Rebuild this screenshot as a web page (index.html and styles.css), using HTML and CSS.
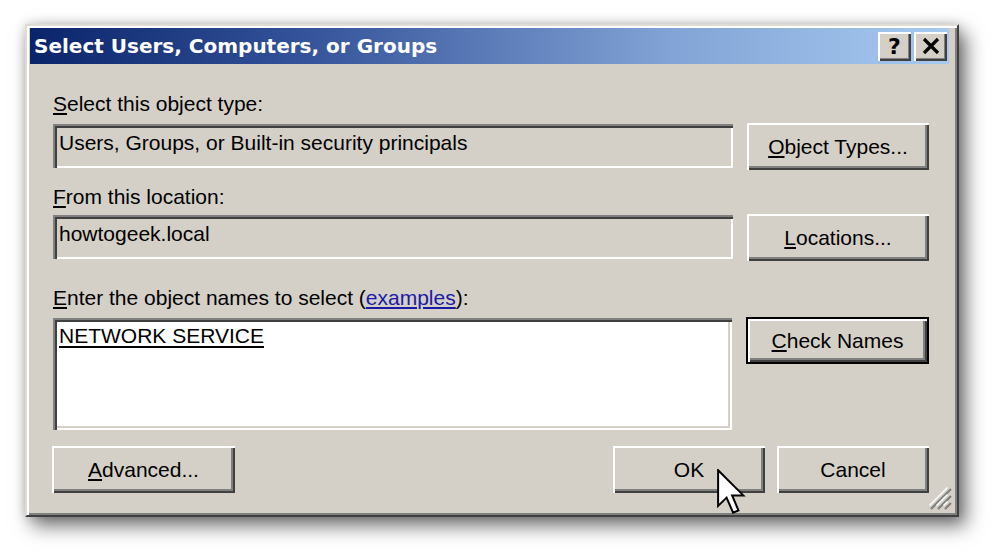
FILE: index.html
```html
<!DOCTYPE html>
<html>
<head>
<meta charset="utf-8">
<link rel="stylesheet" href="styles.css">
</head>
<body>
<div class="stage">
  <div class="window">
    <div class="titlebar">
      <span class="title">Select Users, Computers, or Groups</span>
      <div class="caption-btns">
        <span class="cap cap-help">?</span>
        <span class="cap cap-close">
          <svg width="20" height="18" viewBox="0 0 20 18"><path d="M3 2 L17 16 M17 2 L3 16" stroke="#000" stroke-width="3.2" fill="none"/></svg>
        </span>
      </div>
    </div>
    <div class="body">
      <div class="lbl lbl-first"><u>S</u>elect this object type:</div>
      <div class="row">
        <div class="field">Users, Groups, or Built-in security principals</div>
        <button class="btn"><u>O</u>bject Types...</button>
      </div>
      <div class="lbl lbl-mid"><u>F</u>rom this location:</div>
      <div class="row">
        <div class="field">howtogeek.local</div>
        <button class="btn"><u>L</u>ocations...</button>
      </div>
      <div class="lbl lbl-last"><u>E</u>nter the object names to select (<span class="link">examples</span>):</div>
      <div class="row row-tall">
        <div class="names"><span class="resolved">NETWORK SERVICE</span></div>
        <button class="btn btn-default"><u>C</u>heck Names</button>
      </div>
      <div class="actions">
        <button class="btn btn-adv"><u>A</u>dvanced...</button>
        <span class="spacer"></span>
        <button class="btn btn-small">OK</button>
        <button class="btn btn-small">Cancel</button>
      </div>
    </div>
    <svg class="grip" width="24" height="24" viewBox="0 0 24 24">
      <path d="M23 3 L3 23 M23 10 L10 23 M23 17 L17 23" stroke="#808080" stroke-width="2.2" fill="none"/>
      <path d="M21 3 L3 21 M21 10 L10 21 M21 17 L17 21" stroke="#ffffff" stroke-width="1.4" fill="none" transform="translate(-1.5 -1.5)"/>
    </svg>
  </div>
  <svg class="cursor" width="29" height="47" viewBox="0 0 13 21">
    <path d="M0.5 0.5 V16.5 L4.3 12.8 L7.2 19.5 L9.6 18.5 L6.8 11.8 H11.8 Z" fill="#fff" stroke="#000" stroke-width="0.9" stroke-linejoin="miter"/>
  </svg>
</div>
</body>
</html>
```

FILE: styles.css
```css
* { box-sizing: border-box; }

html, body {
  margin: 0;
  padding: 0;
  background: #ffffff;
}

body {
  width: 1000px;
  height: 558px;
  overflow: hidden;
  font-family: "Liberation Sans", Arial, sans-serif;
  font-size: 21px;
  color: #000;
}

.stage {
  position: relative;
  padding: 24px 0 0 25px;
}

.window {
  position: relative;
  width: 934px;
  height: 493px;
  background: #d4d0c8;
  border: 2px solid;
  border-color: #dedbd4 #404040 #404040 #dedbd4;
  padding: 2px 8px 0 3px;
  box-shadow:
    inset 2px 2px #ffffff,
    inset -2px -2px #808080,
    7px 9px 18px rgba(0, 0, 0, 0.55),
    0 0 10px rgba(0, 0, 0, 0.18);
  display: flex;
  flex-direction: column;
}

.titlebar {
  height: 36px;
  background: linear-gradient(to right, #0a246a 0%, #34539a 30%, #82a4d6 70%, #a6caf0 100%);
  display: flex;
  align-items: center;
  padding: 0 2px 0 4px;
}

.title {
  font-family: "DejaVu Sans", Verdana, sans-serif;
  font-weight: bold;
  font-size: 20px;
  color: #ffffff;
  white-space: nowrap;
  flex: 1;
  margin-top: -1px;
}

.caption-btns {
  display: flex;
  gap: 3px;
}

.cap {
  width: 33px;
  height: 29px;
  background: #d4d0c8;
  box-shadow:
    inset 2px 2px #ffffff,
    inset -2px -2px #404040,
    inset -3px -3px #808080;
  display: flex;
  align-items: center;
  justify-content: center;
}

.cap-help {
  font-family: "DejaVu Sans", Verdana, sans-serif;
  font-weight: bold;
  font-size: 22px;
  line-height: 1;
  padding-top: 1px;
}

.body {
  flex: 1;
  padding: 0 20px 0 23px;
  display: flex;
  flex-direction: column;
}

.lbl {
  line-height: 24px;
  height: 24px;
  white-space: nowrap;
}

.lbl-first { margin-top: 28px; margin-bottom: 8px; }
.lbl-mid { margin-top: 17px; margin-bottom: 6px; }
.lbl-last { margin-top: 27px; margin-bottom: 8px; }

.link {
  color: #1a1aa6;
  text-decoration: underline;
}

.row {
  display: flex;
  gap: 14px;
  align-items: flex-start;
  height: 44px;
}

.row-tall { height: 112px; }

.field {
  width: 680px;
  height: 44px;
  line-height: 24px;
  padding: 7px 6px 5px;
  background: #d4d0c8;
  white-space: nowrap;
  box-shadow:
    inset 2px 2px #808080,
    inset 4px 4px #404040,
    inset -2px -2px #ffffff,
    inset -4px -4px #d4d0c8;
}

.names {
  width: 680px;
  height: 112px;
  line-height: 24px;
  padding: 6px 6px;
  background: #ffffff;
  white-space: nowrap;
  box-shadow:
    inset 2px 2px #808080,
    inset 4px 4px #404040,
    inset -2px -2px #ffffff,
    inset -4px -4px #d4d0c8;
}

.resolved {
  text-decoration: underline;
  text-underline-offset: 3px;
  text-decoration-thickness: 2px;
}

.btn {
  font-family: "Liberation Sans", Arial, sans-serif;
  font-size: 21px;
  color: #000;
  background: #d4d0c8;
  border: 0;
  padding: 0;
  margin: -1px 0 0 0;
  width: 182px;
  height: 47px;
  flex-shrink: 0;
  line-height: 24px;
  box-shadow:
    inset 2px 2px #ffffff,
    inset -2px -2px #404040,
    inset -4px -4px #808080;
  white-space: nowrap;
}

.btn u { text-underline-offset: 2px; }

.btn-default {
  width: 183px;
  border: 2px solid #000;
}

.actions {
  display: flex;
  margin-top: 16px;
  gap: 12px;
}

.actions .btn { margin: 0; }

.btn-adv {
  width: 183px;
  margin-left: -1px !important;
}

.btn-small {
  width: 152px;
}

.spacer { flex: 1; }

.grip {
  position: absolute;
  right: 5px;
  bottom: 5px;
}

.cursor {
  position: absolute;
  left: 717px;
  top: 469px;
}
```
